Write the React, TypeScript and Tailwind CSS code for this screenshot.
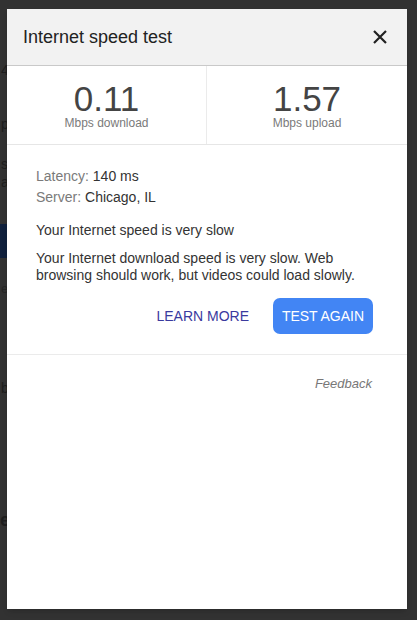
import React from "react";

export default function App() {
  return (
    <div
      className="w-[417px] h-[620px] bg-[#323232] flex overflow-hidden"
      style={{ fontFamily: '"Liberation Sans", Arial, sans-serif' }}
    >
      {/* dim page behind the overlay */}
      <div className="w-[7px] shrink-0 overflow-hidden flex flex-col text-[#1e1e1e]">
        <div className="h-[60px]" />
        <div className="text-[14px] leading-[20px] pl-[1px]">4</div>
        <div className="h-[34px]" />
        <div className="text-[14px] leading-[20px] pl-[1px]">p</div>
        <div className="h-[20px]" />
        <div className="text-[14px] leading-[20px] pl-[1px]">s</div>
        <div className="text-[14px] leading-[16px] pl-[1px]">a</div>
        <div className="h-[34px]" />
        <div className="h-[34px] bg-[#10203c]" />
        <div className="h-[22px]" />
        <div className="text-[13px] leading-[18px] pl-[1px] text-[#262626]">e</div>
        <div className="h-[80px]" />
        <div className="text-[14px] leading-[20px] pl-[1px]">b</div>
        <div className="h-[110px]" />
        <div className="text-[18px] leading-[24px] font-bold">e</div>
      </div>

      <div className="mt-[9px] w-[400px] h-[600px] shrink-0 bg-white flex flex-col shadow-md">
        {/* header */}
        <div className="h-[57px] bg-[#f2f2f2] border-b border-[#c9c9c9] flex items-center justify-between pl-[16px] pr-[18px] shrink-0">
          <span className="text-[18px] text-[#222] leading-none">Internet speed test</span>
          <svg width="16" height="16" viewBox="0 0 16 16" className="mr-[1px]">
            <path d="M2 2 L14 14 M14 2 L2 14" stroke="#222" strokeWidth="2.2" strokeLinecap="butt" />
          </svg>
        </div>

        {/* stats */}
        <div className="h-[79px] border-b border-[#e6e6e6] flex shrink-0">
          <div className="w-[200px] border-r border-[#ebebeb] flex flex-col items-center pt-[15px]">
            <div className="text-[35px] leading-[35px] text-[#444]">0.11</div>
            <div className="text-[12px] leading-[14px] text-[#7a7a7a]">Mbps download</div>
          </div>
          <div className="flex-1 flex flex-col items-center pt-[15px]">
            <div className="text-[35px] leading-[35px] text-[#444]">1.57</div>
            <div className="text-[12px] leading-[14px] text-[#7a7a7a]">Mbps upload</div>
          </div>
        </div>

        {/* body */}
        <div className="pl-[29px] pr-[34px] pt-[21px] border-b border-[#ebebeb] pb-[20px] shrink-0">
          <div className="text-[14px] leading-[21px] text-[#333]">
            <span className="text-[#7a7a7a]">Latency: </span>140 ms
          </div>
          <div className="text-[14px] leading-[21px] text-[#333]">
            <span className="text-[#7a7a7a]">Server: </span>Chicago, IL
          </div>
          <div className="text-[14px] leading-[20px] text-[#333] mt-[12px]">Your Internet speed is very slow</div>
          <div className="text-[14px] leading-[17px] text-[#333] mt-[10px]">
            Your Internet download speed is very slow. Web browsing should work, but videos could load slowly.
          </div>
          <div className="flex justify-end items-center mt-[14px] gap-[24px]">
            <span className="text-[14px] text-[#3a3a9e]">LEARN MORE</span>
            <div className="w-[100px] h-[36px] rounded-[7px] bg-[#4285f4] text-white text-[14px] flex items-center justify-center">
              TEST AGAIN
            </div>
          </div>
        </div>

        {/* feedback */}
        <div className="flex justify-end pr-[35px] pt-[19px]">
          <span className="text-[13px] italic text-[#777]">Feedback</span>
        </div>
      </div>
    </div>
  );
}
